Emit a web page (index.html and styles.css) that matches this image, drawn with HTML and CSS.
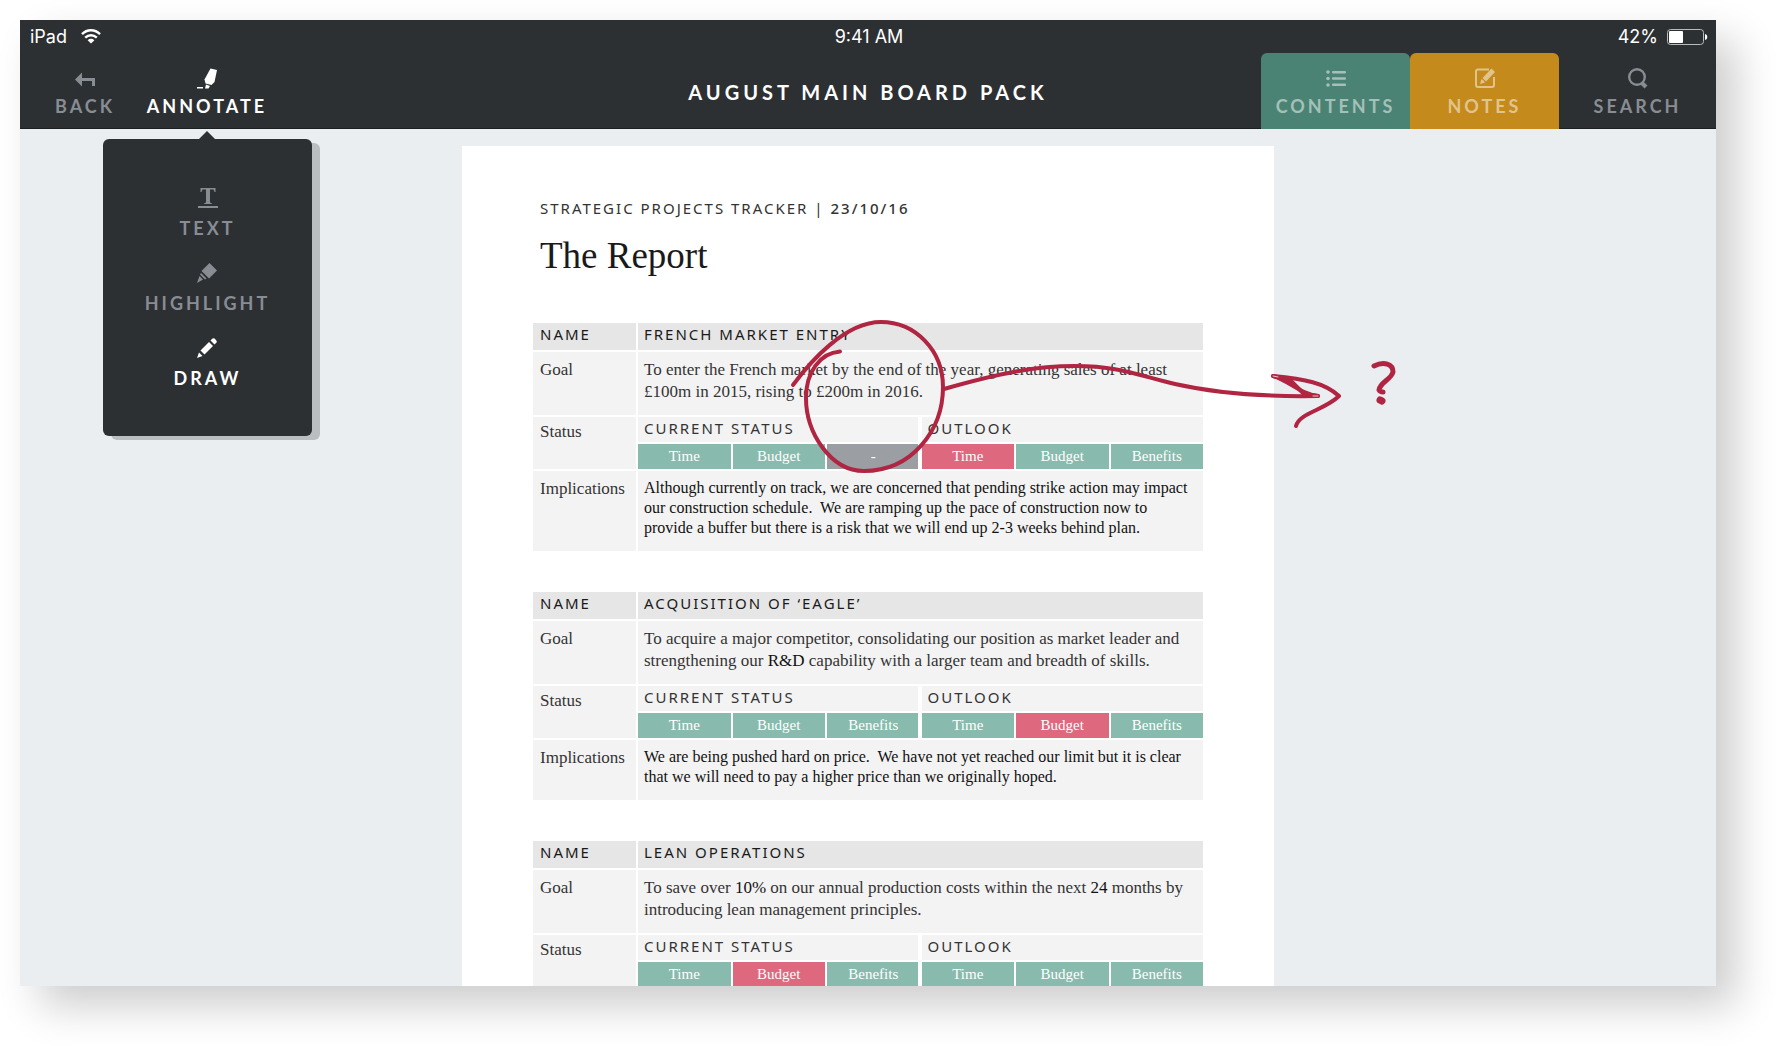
FILE: index.html
```
<!DOCTYPE html>
<html lang="en">

<head>
    <meta charset="utf-8" />
    <meta name="viewport" content="width=device-width, initial-scale=1.0">
    <title>August Main Board Pack</title>
    <link rel="stylesheet" href="styles.css">
</head>

<body>
    <div class="screen">
        <header class="topbar">
            <div class="statusbar">
                <div class="device">
                    <span>iPad</span>
                    <svg class="wifi" width="20" height="15" viewBox="0 0 20 15" fill="none" stroke="#fff" stroke-width="2.4">
                        <path d="M1 5.2C6 0 14 0 19 5.2" />
                        <path d="M4.2 8.6C7.6 5.4 12.4 5.4 15.8 8.6" />
                        <path d="M10 14.6L6.6 11.2C8.6 9.4 11.4 9.4 13.4 11.2Z" fill="#fff" stroke="none" />
                    </svg>
                </div>
                <div class="clock">9:41 AM</div>
                <div class="battery">
                    <span>42%</span>
                    <svg width="41" height="16" viewBox="0 0 41 16">
                        <rect x="0.5" y="0.5" width="36" height="15" rx="3" fill="none" stroke="#b9bbbc" />
                        <rect x="2" y="2" width="14" height="12" rx="1" fill="#fff" />
                        <path d="M38 5C41 5.5 41 10.5 38 11Z" fill="#fff" />
                    </svg>
                </div>
            </div>

            <nav class="toolbar">
                <div class="tools left">
                    <button class="tool back">
                        <svg width="20" height="22" viewBox="0 0 20 22" fill="#878d93">
                            <path d="M0 12.5L7 5.5V11H20V19H17V14H7V19.5Z" />
                        </svg>
                        Back
                    </button>
                    <button class="tool annotate active">
                        <svg width="20" height="22" viewBox="0 0 20 22" fill="#fff">
                            <path d="M13.5 1.5L20 3L17.5 15L14.5 18L8.5 16.5L7.5 12.5Z" />
                            <path d="M9 17.5L13 19L11.5 21.5H8Z" />
                            <path d="M0 20H6V21.5H0Z" />
                        </svg>
                        Annotate
                    </button>
                </div>
                <h1>August Main Board Pack</h1>
                <div class="tools right">
                    <button class="tool tab contents">
                        <svg width="20" height="22" viewBox="0 0 20 22" fill="#a4c0b8">
                            <circle cx="2" cy="5" r="1.8" />
                            <circle cx="2" cy="11.5" r="1.8" />
                            <circle cx="2" cy="18" r="1.8" />
                            <rect x="6" y="4" width="14" height="2.6" rx="1" />
                            <rect x="6" y="10.2" width="14" height="2.6" rx="1" />
                            <rect x="6" y="16.500" width="14" height="2.6" rx="1" />
                        </svg>
                        Contents
                    </button>
                    <button class="tool tab notes">
                        <svg width="20" height="22" viewBox="0 0 20 22" fill="none" stroke="#e1c48c" stroke-width="2">
                            <path d="M14 2.500H3Q1 2.500 1 4.500V18Q1 20 3 20H17Q19 20 19 18V10" />
                            <path d="M5 17L6.500 12L8.500 13.500L10 15.500Z" fill="#e1c48c" stroke="none" />
                            <path d="M7.500 11L16.500 1.500L20 5L11 14.500Z" fill="#e1c48c" stroke="none" />
                        </svg>
                        Notes
                    </button>
                    <button class="tool search">
                        <svg width="20" height="22" viewBox="0 0 20 22" fill="none" stroke="#878d93">
                            <circle cx="9" cy="10" r="7.8" stroke-width="2.4" />
                            <path d="M13.5 15.5L18 20" stroke-width="4" />
                        </svg>
                        Search
                    </button>
                </div>
            </nav>
        </header>

        <main class="desk">
            <div class="menu">
                <button class="tool">
                    <svg width="20" height="22" viewBox="0 0 20 22" fill="#878d93">
                        <path d="M2.500 1H17.500V5H16.500L15.500 2.500H12V15.500L14 16.500V17H6V16.500L8 15.500V2.500H4.500L3.500 5H2.500Z" />
                        <path d="M0 19H20V21H0Z" />
                    </svg>
                    Text
                </button>
                <button class="tool">
                    <svg width="20" height="22" viewBox="0 0 20 22" fill="#878d93">
                        <path d="M12.5 1L20 8.500L12 16.5L4.5 9Z" />
                        <path d="M4 11L9.500 16.500L8 17.500L3 12.5Z" />
                        <path d="M2.500 14L6 17.500L0 21Z" />
                    </svg>
                    Highlight
                </button>
                <button class="tool active">
                    <svg width="20" height="22" viewBox="0 0 20 22" fill="#fff">
                        <path d="M13.5 3.5L15.500 1.500Q17 0.500 18.5 2.5Q20.5 4.5 19.500 5.500L17.5 7.5Z" />
                        <path d="M12 5L16 9L7.5 17.5L3.5 13.5Z" />
                        <path d="M2 15.500L5.500 19L0 21Z" />
                    </svg>
                    Draw
                </button>
            </div>

            <article class="page">
                <p class="kicker">STRATEGIC PROJECTS TRACKER | <b>23/10/16</b></p>
                <h2>The Report</h2>

                <table>
                    <colgroup><col class="labels"><col span="6"></colgroup>
                    <tr class="name">
                        <th>NAME</th>
                        <td colspan="6">FRENCH MARKET ENTRY</td>
                    </tr>
                    <tr class="goal">
                        <th>Goal</th>
                        <td colspan="6">To enter the French market by the end of the year, generating sales of at least<br>£100m in 2015, rising to £200m in 2016.</td>
                    </tr>
                    <tr class="status">
                        <th rowspan="2">Status</th>
                        <td colspan="3" class="split">CURRENT STATUS</td>
                        <td colspan="3">OUTLOOK</td>
                    </tr>
                    <tr class="rag">
                        <td class="green">Time</td>
                        <td class="green">Budget</td>
                        <td class="grey split">-</td>
                        <td class="red">Time</td>
                        <td class="green">Budget</td>
                        <td class="green">Benefits</td>
                    </tr>
                    <tr class="implications">
                        <th>Implications</th>
                        <td colspan="6">Although currently on track, we are concerned that pending strike action may impact<br>our construction schedule.&nbsp; We are ramping up the pace of construction now to<br>provide a buffer but there is a risk that we will end up 2-3 weeks behind plan.</td>
                    </tr>
                </table>

                <table>
                    <colgroup><col class="labels"><col span="6"></colgroup>
                    <tr class="name">
                        <th>NAME</th>
                        <td colspan="6">ACQUISITION OF ‘EAGLE’</td>
                    </tr>
                    <tr class="goal">
                        <th>Goal</th>
                        <td colspan="6">To acquire a major competitor, consolidating our position as market leader and<br>strengthening our <b>R&amp;D</b> capability with a larger team and breadth of skills.</td>
                    </tr>
                    <tr class="status">
                        <th rowspan="2">Status</th>
                        <td colspan="3" class="split">CURRENT STATUS</td>
                        <td colspan="3">OUTLOOK</td>
                    </tr>
                    <tr class="rag">
                        <td class="green">Time</td>
                        <td class="green">Budget</td>
                        <td class="green split">Benefits</td>
                        <td class="green">Time</td>
                        <td class="red">Budget</td>
                        <td class="green">Benefits</td>
                    </tr>
                    <tr class="implications">
                        <th>Implications</th>
                        <td colspan="6">We are being pushed hard on price.&nbsp; We have not yet reached our limit but it is clear<br>that we will need to pay a higher price than we originally hoped.</td>
                    </tr>
                </table>

                <table>
                    <colgroup><col class="labels"><col span="6"></colgroup>
                    <tr class="name">
                        <th>NAME</th>
                        <td colspan="6">LEAN OPERATIONS</td>
                    </tr>
                    <tr class="goal">
                        <th>Goal</th>
                        <td colspan="6">To save over <b>10%</b> on our annual production costs within the next <b>24</b> months by<br>introducing lean management principles.</td>
                    </tr>
                    <tr class="status">
                        <th rowspan="2">Status</th>
                        <td colspan="3" class="split">CURRENT STATUS</td>
                        <td colspan="3">OUTLOOK</td>
                    </tr>
                    <tr class="rag">
                        <td class="green">Time</td>
                        <td class="red">Budget</td>
                        <td class="green split">Benefits</td>
                        <td class="green">Time</td>
                        <td class="green">Budget</td>
                        <td class="green">Benefits</td>
                    </tr>
                </table>

                <!-- pen marks drawn over the page -->
                <svg class="ink" width="950" height="420" viewBox="462 146 950 420">
                    <path d="M793 385C810 362 845 322 881 322C915 322 943 350 943 387C943 430 912 471 864 471C830 471 806 432 806 398C806 372 820 353 840 351.5" />
                    <path d="M944 389C1000 373 1036 366 1075 366C1120 366 1140 376 1175 384C1215 393 1260 397 1318 396C1300 394 1290 381 1273 376C1305 379 1325 383 1339 396C1325 410 1299 413 1296 426" />
                    <path d="M1273 376L1290 380L1304 394L1318 396" />
                    <path class="thick" d="M1374 366C1384 361 1393 364 1393 372C1391 380 1380 382 1379 390Q1380 392 1383 392" />
                    <path class="dot" d="M1380 400L1382 401" />
                    <path class="glint" d="M1273 376L1278 377M1313 396H1318" />
                </svg>
            </article>
        </main>
    </div>
</body>

</html>
```
FILE: styles.css
```
* {
    box-sizing: border-box;
}

body {
    margin: 0px;
    padding: 20px 60px 60px 20px;
    background-color: #fff;
}

h1,
h2,
p {
    margin: 0px;
    font-weight: normal;
}

.screen {
    display: flex;
    flex-direction: column;
    height: calc(100vh - 80px);
    background-color: #eaeef1;
    box-shadow: 20px 20px 40px rgba(0, 0, 0, 0.2);
}

/* top bar */
.topbar {
    background-color: #2d3033;
    color: #fff;
    border-bottom: 1px solid #1c1f21;
}

.statusbar {
    display: grid;
    grid-template-columns: 1fr auto 1fr;
    align-items: center;
    height: 33px;
    padding: 0px 8px 0px 10px;
    font-family: Inter, "Liberation Sans", sans-serif;
    font-size: 18px;
}

.device,
.battery {
    display: flex;
    align-items: center;
    gap: 14px;
}

.battery {
    justify-content: flex-end;
    gap: 9px;
}

.toolbar {
    display: grid;
    grid-template-columns: 1fr auto 1fr;
    height: 75px;
}

.tools {
    display: flex;
}

.left {
    padding-left: 19px;
}

.right {
    justify-content: flex-end;
}

h1 {
    padding-top: 24px;
    font-family: Lato, sans-serif;
    font-size: 20px;
    line-height: 30px;
    font-weight: bold;
    letter-spacing: 4px;
    text-transform: uppercase;
}

.tool {
    display: flex;
    flex-direction: column;
    align-items: center;
    gap: 5px;
    padding: 14px 0px 0px;
    border: none;
    background: none;
    color: #878d93;
    font-family: Lato, sans-serif;
    font-size: 18px;
    line-height: 24px;
    font-weight: bold;
    letter-spacing: 3px;
    text-transform: uppercase;
}

.active {
    color: #fff;
}

.back {
    width: 92px;
}

.annotate {
    width: 152px;
}

.tab {
    width: 149px;
    margin-bottom: -1px;
    border-radius: 6px 6px 0px 0px;
}

.contents {
    background-color: #4a8373;
    color: #a4c0b8;
}

.notes {
    background-color: #c48a1b;
    color: #e1c48c;
}

.search {
    width: 157px;
}

/* document area */
.desk {
    flex: 1;
    position: relative;
    min-height: 0px;
    padding-top: 17px;
}

.menu {
    position: absolute;
    top: 10px;
    left: 83px;
    display: flex;
    flex-direction: column;
    align-items: center;
    width: 209px;
    height: 297px;
    padding-top: 34px;
    border-radius: 6px;
    background-color: #2d3033;
    box-shadow: 8px 4px 0px #bbbec1;
}

.menu::before {
    content: "";
    position: absolute;
    top: -8px;
    left: 96px;
    border: 8px solid transparent;
    border-top: none;
    border-bottom-color: #2d3033;
}

.menu .tool {
    gap: 7px;
    height: 75px;
}

.page {
    position: relative;
    width: 812px;
    height: 100%;
    margin: 0px auto;
    padding: 50px 69px 0px;
    background-color: #fff;
    color: #333;
    clip-path: inset(0px -300px 0px 0px);
}

.kicker {
    padding-left: 9px;
    font-family: "Noto Sans", sans-serif;
    font-size: 15px;
    line-height: 24px;
    letter-spacing: 2px;
}

.kicker b {
    font-weight: 500;
}

h2 {
    padding-left: 9px;
    margin: 13px 0px 42px;
    color: #1a1a1a;
    font-family: "Liberation Serif", serif;
    font-size: 37px;
    line-height: 46px;
}

table {
    width: 100%;
    margin-bottom: 37px;
    table-layout: fixed;
    border-spacing: 2px;
    font-family: "Liberation Serif", serif;
    white-space: nowrap;
}

.labels {
    width: 103px;
}

th,
td {
    padding: 0px 6px;
    background-color: #f3f3f3;
    font-size: 17px;
    line-height: 22px;
    font-weight: normal;
    text-align: left;
    vertical-align: top;
}

th {
    padding-left: 7px;
}

.name th,
.name td,
.status td {
    font-family: "Noto Sans", sans-serif;
    font-size: 15px;
    letter-spacing: 2px;
}

.name th,
.name td {
    height: 27px;
    background-color: #e6e6e6;
    color: #1a1a1a;
}

.goal th,
.goal td {
    height: 63px;
    padding-top: 7px;
}

.goal b {
    font-weight: normal;
    color: #111;
}

.status th {
    padding-top: 4px;
}

.status td {
    height: 25px;
}

.rag td {
    height: 25px;
    padding: 1px 0px 0px;
    color: #fff;
    font-size: 15px;
    text-align: center;
}

/* wider gap between current status and outlook */
.split {
    box-shadow: inset -2px 0px 0px #fff;
}

.rag .green {
    background-color: #88bbad;
}

.rag .red {
    background-color: #de697e;
}

.rag .grey {
    background-color: #9b9fa3;
}

.implications th,
.implications td {
    padding-top: 7px;
    padding-bottom: 13px;
}

.implications td {
    color: #111;
    font-size: 16px;
    line-height: 20px;
}

.ink {
    position: absolute;
    top: 0px;
    left: 0px;
    fill: none;
    stroke: #b02542;
    stroke-width: 4;
    stroke-linecap: round;
    stroke-linejoin: round;
}

.thick {
    stroke-width: 5;
}

.dot {
    stroke-width: 7;
}

.glint {
    stroke: #e9c3cb;
    stroke-width: 1;
}
```
